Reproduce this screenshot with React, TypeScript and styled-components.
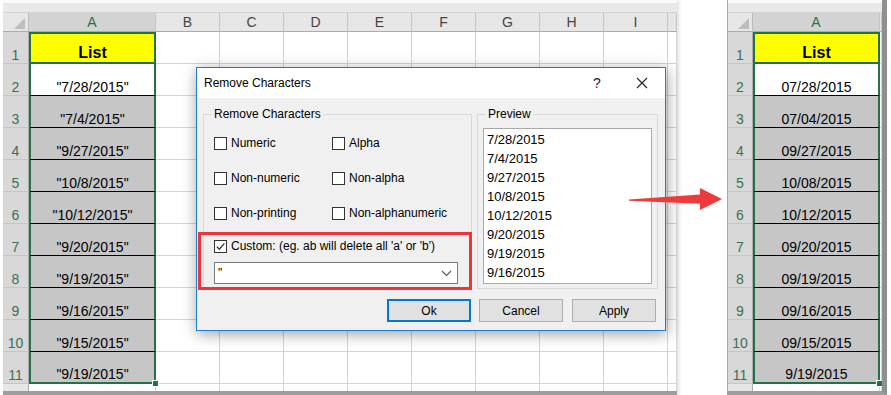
import React from "react";
import styled, { createGlobalStyle } from "styled-components";

const GREEN = "#217346";

const leftValues = [
  '"7/28/2015"',
  '"7/4/2015"',
  '"9/27/2015"',
  '"10/8/2015"',
  '"10/12/2015"',
  '"9/20/2015"',
  '"9/19/2015"',
  '"9/16/2015"',
  '"9/15/2015"',
  '"9/19/2015"',
];

const rightValues = [
  "07/28/2015",
  "07/04/2015",
  "09/27/2015",
  "10/08/2015",
  "10/12/2015",
  "09/20/2015",
  "09/19/2015",
  "09/16/2015",
  "09/15/2015",
  "9/19/2015",
];

const previewItems = [
  "7/28/2015",
  "7/4/2015",
  "9/27/2015",
  "10/8/2015",
  "10/12/2015",
  "9/20/2015",
  "9/19/2015",
  "9/16/2015",
];

const options = [
  ["Numeric", "Alpha"],
  ["Non-numeric", "Non-alpha"],
  ["Non-printing", "Non-alphanumeric"],
];

interface SheetProps {
  values: string[];
  extraCols: string[];
  cols: string;
  width: number;
  $edge?: boolean;
}

const Sheet: React.FC<SheetProps> = ({ values, extraCols, cols, width, $edge }) => {
  const blanks = (key: string) =>
    [...extraCols, "stub"].map((c) => <BlankCell key={key + c} />);

  return (
    <SheetFrame $width={width} $edge={$edge}>
      <TopStrip />
      <Grid $cols={cols}>
        <Corner>
          <CornerMark />
        </Corner>
        <ColHeader $selected>A</ColHeader>
        {extraCols.map((c) => (
          <ColHeader key={c}>{c}</ColHeader>
        ))}
        <ColHeader />

        <RowHeader $selected>1</RowHeader>
        <TitleCell>List</TitleCell>
        {blanks("r1")}

        {values.map((v, i) => {
          const last = i === values.length - 1;
          return (
            <React.Fragment key={i}>
              <RowHeader $selected>{i + 2}</RowHeader>
              <ValueCell $shaded={i > 0} $last={last}>
                {v}
                {last && <FillHandle />}
              </ValueCell>
              {blanks("r" + (i + 2))}
            </React.Fragment>
          );
        })}

        <RowHeader>12</RowHeader>
        <BlankCell />
        {blanks("r12")}
      </Grid>
    </SheetFrame>
  );
};

const CheckBox: React.FC<{ checked?: boolean }> = ({ checked }) => (
  <Box>
    {checked && (
      <svg width="11" height="11" viewBox="0 0 11 11">
        <path d="M1.8 5.6 L4.3 8.2 L9.4 2.4" fill="none" stroke="#333" strokeWidth="1.3" />
      </svg>
    )}
  </Box>
);

const App: React.FC = () => {
  return (
    <>
      <GlobalStyle />
      <Page>
        <Sheet
          values={leftValues}
          extraCols={["B", "C", "D", "E", "F", "G", "H", "I"]}
          cols="26px 127px repeat(8, 64px) 1fr"
          width={674}
        />
        <RightSlot>
          <Sheet values={rightValues} extraCols={[]} cols="25px 127px 1fr" width={160} $edge />
        </RightSlot>

        <Dialog>
          <TitleBar>
            <TitleText>Remove Characters</TitleText>
            <TitleButton>?</TitleButton>
            <TitleButton>
              <svg width="12" height="12" viewBox="0 0 12 12">
                <path d="M1 1 L11 11 M11 1 L1 11" stroke="#222" strokeWidth="1.1" />
              </svg>
            </TitleButton>
          </TitleBar>
          <Body>
            <GroupsRow>
              <Group $w={269}>
                <Legend>Remove Characters</Legend>
                <OptionGrid>
                  {options.flat().map((o) => (
                    <Option key={o}>
                      <CheckBox />
                      {o}
                    </Option>
                  ))}
                </OptionGrid>
                <CustomRow>
                  <CheckBox checked />
                  Custom: (eg. ab will delete all 'a' or 'b')
                </CustomRow>
                <Combo>
                  <span>"</span>
                  <svg width="11" height="7" viewBox="0 0 11 7">
                    <path d="M1 1 L5.5 5.5 L10 1" fill="none" stroke="#555" strokeWidth="1.1" />
                  </svg>
                </Combo>
              </Group>
              <Group $w={181}>
                <Legend>Preview</Legend>
                <ListBox>
                  {previewItems.map((p) => (
                    <ListItem key={p}>{p}</ListItem>
                  ))}
                </ListBox>
              </Group>
            </GroupsRow>
            <ButtonRow>
              <Button $primary>Ok</Button>
              <Button>Cancel</Button>
              <Button $spaced>Apply</Button>
            </ButtonRow>
          </Body>
          <Highlight />
        </Dialog>

        <Arrow width="100" height="30" viewBox="0 0 100 30">
          <polygon points="3,15.4 74,10.6 74,4 96,15 74,26 74,19.8 3,16.8" fill="#ef3a3c" />
        </Arrow>
      </Page>
    </>
  );
};

export default App;

const GlobalStyle = createGlobalStyle`
  html, body {
    margin: 0;
    padding: 0;
    background: #fff;
  }
  body {
    font-family: "Liberation Sans", Arial, sans-serif;
  }
  * {
    box-sizing: border-box;
  }
`;

const Page = styled.div`
  position: relative;
  display: flex;
  width: 891px;
  height: 395px;
  padding-left: 3px;
  overflow: hidden;
  background: #fff;
`;

const RightSlot = styled.div`
  margin-left: 50px;
`;

const SheetFrame = styled.div<{ $width: number; $edge?: boolean }>`
  width: ${(p) => p.$width}px;
  height: 395px;
  overflow: hidden;
  background: #fff;
  border-bottom: 4px solid #9d9d9d;
  border-left: ${(p) => (p.$edge ? "1px solid #a9a9a9" : "none")};
  border-right: ${(p) => (p.$edge ? "5px solid #8f8f8f" : "none")};
  box-shadow: ${(p) => (p.$edge ? "none" : "2px 0 3px rgba(0,0,0,0.12)")};
`;

const TopStrip = styled.div`
  height: 13px;
  background: #e9e9e9;
  border-top: 3px solid #fafafa;
  border-bottom: 1px solid #d2d2d2;
`;

const Grid = styled.div<{ $cols: string }>`
  display: grid;
  grid-template-columns: ${(p) => p.$cols};
  grid-template-rows: 19px;
  grid-auto-rows: 32px;
  font-size: 14px;
`;

const Corner = styled.div`
  display: flex;
  align-items: flex-end;
  justify-content: flex-end;
  padding: 0 3px 2px 0;
  background: #e6e6e6;
  border-right: 1px solid #bcbcbc;
  border-bottom: 1px solid #ababab;
`;

const CornerMark = styled.div`
  width: 0;
  height: 0;
  border-left: 11px solid transparent;
  border-bottom: 11px solid #bdbdbd;
`;

const ColHeader = styled.div<{ $selected?: boolean }>`
  display: flex;
  align-items: center;
  justify-content: center;
  background: ${(p) => (p.$selected ? "#d3d3d3" : "#e6e6e6")};
  color: ${(p) => (p.$selected ? GREEN : "#444")};
  border-right: 1px solid #c6c6c6;
  border-bottom: 1px solid #ababab;
`;

const RowHeader = styled.div<{ $selected?: boolean }>`
  display: flex;
  align-items: flex-end;
  justify-content: center;
  padding-bottom: 0;
  line-height: 15px;
  background: ${(p) => (p.$selected ? "#d8d8d8" : "#e6e6e6")};
  color: ${(p) => (p.$selected ? "#3a7052" : "#444")};
  border-right: 1px solid #ababab;
  border-bottom: 1px solid #c6c6c6;
`;

const BlankCell = styled.div`
  border-right: 1px solid #d4d4d4;
  border-bottom: 1px solid #d4d4d4;
`;

const TitleCell = styled.div`
  display: flex;
  align-items: flex-end;
  justify-content: center;
  padding-bottom: 0;
  line-height: 19px;
  background: #ffff00;
  font-weight: bold;
  font-size: 16px;
  color: #000;
  border: 2px solid ${GREEN};
`;

const ValueCell = styled.div<{ $shaded: boolean; $last: boolean }>`
  position: relative;
  display: flex;
  align-items: flex-end;
  justify-content: center;
  padding-bottom: 0;
  line-height: 15px;
  background: ${(p) => (p.$shaded ? "#c6c6c6" : "#fff")};
  color: #000;
  border-left: 2px solid ${GREEN};
  border-right: 2px solid ${GREEN};
  border-bottom: ${(p) => (p.$last ? `2px solid ${GREEN}` : "1px solid #000")};
`;

const FillHandle = styled.span`
  position: absolute;
  right: -5px;
  bottom: -5px;
  width: 7px;
  height: 7px;
  background: ${GREEN};
  border: 1px solid #fff;
`;

const Arrow = styled.svg`
  position: absolute;
  left: 626px;
  top: 184px;
`;

const Dialog = styled.div`
  position: absolute;
  left: 196px;
  top: 67px;
  width: 470px;
  height: 264px;
  display: flex;
  flex-direction: column;
  background: #f0f0f0;
  border: 1px solid #1a7fd4;
  box-shadow: 1px 3px 14px rgba(0, 0, 0, 0.38);
  font-family: "Liberation Sans", Arial, sans-serif;
  font-size: 12px;
  color: #000;
`;

const TitleBar = styled.div`
  display: flex;
  align-items: center;
  height: 30px;
  padding: 0 8px 0 7px;
  background: #fff;
`;

const TitleText = styled.div`
  flex: 1;
  font-size: 12px;
`;

const TitleButton = styled.div`
  display: flex;
  align-items: center;
  justify-content: center;
  width: 30px;
  height: 30px;
  margin-left: 15px;
  font-size: 14px;
  color: #222;
`;

const Body = styled.div`
  flex: 1;
  padding: 0 7px 0 6px;
`;

const GroupsRow = styled.div`
  display: flex;
  gap: 5px;
  margin-top: 9px;
`;

const Group = styled.fieldset<{ $w: number }>`
  width: ${(p) => p.$w}px;
  height: 182px;
  margin: 0;
  padding: 0 6px 0 10px;
  min-width: 0;
  border: 1px solid #d9d9d9;
`;

const Legend = styled.legend`
  margin-left: -2px;
  padding: 0 2px;
  line-height: 14px;
  font-size: 12px;
`;

const OptionGrid = styled.div`
  display: grid;
  grid-template-columns: 118px 1fr;
  grid-auto-rows: 20px;
  row-gap: 15px;
  margin-top: 12px;
`;

const Option = styled.label`
  display: flex;
  align-items: center;
  gap: 4px;
`;

const CustomRow = styled(Option)`
  height: 20px;
  margin-top: 13px;
`;

const Box = styled.span`
  display: inline-flex;
  align-items: center;
  justify-content: center;
  width: 13px;
  height: 13px;
  background: #fff;
  border: 1px solid #333;
`;

const Combo = styled.div`
  display: flex;
  align-items: center;
  justify-content: space-between;
  width: 244px;
  height: 22px;
  margin-top: 6px;
  padding: 0 5px 0 3px;
  background: #fff;
  border: 1px solid #7a7a7a;
`;

const ListBox = styled.div`
  width: 169px;
  height: 156px;
  margin: 7px 0 0 -5px;
  padding: 1px 0 0 3px;
  background: #fff;
  border: 1px solid #a9a9a9;
  overflow: hidden;
`;

const ListItem = styled.div`
  font-size: 13px;
  line-height: 19px;
`;

const ButtonRow = styled.div`
  display: flex;
  justify-content: flex-end;
  gap: 8px;
  margin-top: 10px;
  padding-right: 2px;
`;

const Button = styled.div<{ $primary?: boolean; $spaced?: boolean }>`
  display: flex;
  align-items: center;
  justify-content: center;
  width: 84px;
  height: 23px;
  margin-left: ${(p) => (p.$spaced ? "1px" : "0")};
  background: #e1e1e1;
  border: ${(p) => (p.$primary ? "2px solid #0078d7" : "1px solid #adadad")};
  font-size: 12px;
`;

const Highlight = styled.div`
  position: absolute;
  left: 1px;
  top: 164px;
  width: 274px;
  height: 58px;
  border: 3px solid #ee3438;
  pointer-events: none;
`;
